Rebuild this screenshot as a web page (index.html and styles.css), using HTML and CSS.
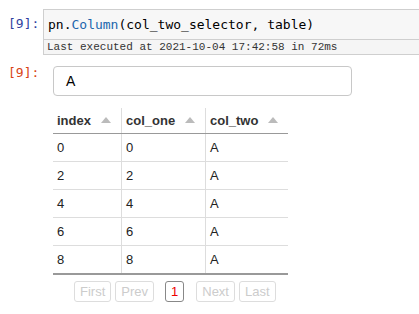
FILE: index.html
```html
<!DOCTYPE html>
<html>
<head>
  <meta charset="UTF-8">
  <title>Notebook cell</title>
  <link rel="stylesheet" href="styles.css">
</head>
<body>
  <div class="cell">
    <div class="prompt in-prompt">[9]:</div>
    <div class="input-area">
      <div class="code">pn.<span class="prop">Column</span>(col_two_selector, table)</div>
      <div class="exec-time">Last executed at 2021-10-04 17:42:58 in 72ms</div>
    </div>
  </div>

  <div class="cell output">
    <div class="prompt out-prompt">[9]:</div>
    <div class="output-area">
      <div class="text-input">A</div>

      <table class="grid">
        <thead>
          <tr>
            <th>index <span class="sort"></span></th>
            <th>col_one <span class="sort"></span></th>
            <th>col_two <span class="sort"></span></th>
          </tr>
        </thead>
        <tbody>
          <tr><td>0</td><td>0</td><td>A</td></tr>
          <tr><td>2</td><td>2</td><td>A</td></tr>
          <tr><td>4</td><td>4</td><td>A</td></tr>
          <tr><td>6</td><td>6</td><td>A</td></tr>
          <tr><td>8</td><td>8</td><td>A</td></tr>
        </tbody>
      </table>

      <div class="pager">
        <button class="pg">First</button>
        <button class="pg">Prev</button>
        <button class="pg current">1</button>
        <button class="pg">Next</button>
        <button class="pg">Last</button>
      </div>
    </div>
  </div>
</body>
</html>
```

FILE: styles.css
```css
body {
  margin: 0;
  padding-top: 9px;
  background-color: #ffffff;
  font-family: "Liberation Sans", Arial, sans-serif;
  overflow: hidden;
}

.cell {
  display: flex;
  align-items: flex-start;
}

.prompt {
  width: 43px;
  flex: none;
  box-sizing: border-box;
  padding-left: 8px;
  font-family: "DejaVu Sans Mono", monospace;
  font-size: 13px;
}

.in-prompt {
  color: #303F9F;
  line-height: 30px;
}

.out-prompt {
  color: #D84315;
  margin-top: 5px;
  line-height: 22px;
}

.input-area {
  flex: 1;
  background-color: #f7f7f7;
  border: 1px solid #cfcfcf;
  border-right: none;
}

.code {
  height: 29px;
  line-height: 29px;
  padding-left: 4px;
  font-family: "DejaVu Sans Mono", monospace;
  font-size: 13px;
  color: #000000;
  white-space: pre;
}

.prop {
  color: #2166ad;
}

.exec-time {
  border-top: 1px solid #cfcfcf;
  height: 14px;
  line-height: 14px;
  padding-left: 3px;
  font-family: "Liberation Mono", monospace;
  font-size: 11px;
  color: #333333;
  background-color: #f5f5f5;
}

.output {
  margin-top: 2px;
}

.output-area {
  padding: 9px 0 0 10px;
}

.text-input {
  width: 285px;
  height: 28px;
  line-height: 28px;
  padding-left: 12px;
  border: 1px solid #c8c8c8;
  border-radius: 4px;
  font-size: 14px;
  color: #000000;
}

.grid {
  margin-top: 12px;
  border-collapse: collapse;
  font-size: 13px;
  color: #222222;
}

.grid th {
  height: 25px;
  padding: 0 4px;
  text-align: left;
  font-weight: bold;
  color: #333333;
  border-bottom: 1px solid #999999;
  border-left: 1px solid #dddddd;
}

.grid th:first-child,
.grid td:first-child {
  border-left: none;
}

.grid th:nth-child(1) { width: 60px; }
.grid th:nth-child(2) { width: 75px; }
.grid th:nth-child(3) { width: 74px; }

.grid td {
  height: 27px;
  padding: 0 4px;
  border-bottom: 1px solid #dddddd;
  border-left: 1px solid #dddddd;
}

.grid tbody tr:last-child td {
  border-bottom: 2px solid #999999;
}

.sort {
  display: inline-block;
  width: 0;
  height: 0;
  margin-left: 6px;
  vertical-align: 2px;
  border-left: 5px solid transparent;
  border-right: 5px solid transparent;
  border-bottom: 6px solid #bbbbbb;
}

.pager {
  display: flex;
  align-items: center;
  margin-top: 6px;
  padding-left: 21px;
}

.pg {
  height: 21px;
  padding: 0 5px;
  margin: 0;
  margin-right: 4px;
  background: #ffffff;
  border: 1px solid #dddddd;
  border-radius: 3px;
  font-family: "Liberation Sans", Arial, sans-serif;
  font-size: 13px;
  color: #cccccc;
}

.pg:nth-child(2) { margin-right: 11px; }

.pg.current {
  padding: 0 5px;
  margin-right: 12px;
  border-color: #888888;
  color: #ee0000;
}
```
